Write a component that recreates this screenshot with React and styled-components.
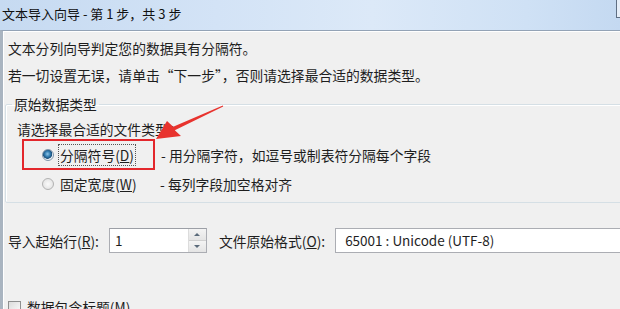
import styled, { createGlobalStyle } from 'styled-components';

const GlobalStyle = createGlobalStyle`
  html, body {
    margin: 0;
    padding: 0;
    background: #f0f0f0;
  }
  body {
    font-family: "Noto Sans CJK SC", "Noto Sans", sans-serif;
    color: #1e1e1e;
  }
`;

const Window = styled.div`
  position: relative;
  width: 620px;
  height: 309px;
  overflow: hidden;
  display: flex;
  flex-direction: column;
  background: #f0f0f0;
`;

const TitleBar = styled.div`
  height: 30px;
  flex: none;
  display: flex;
  align-items: flex-start;
  padding-left: 2px;
  background: linear-gradient(90deg, #c6daf1 0%, #d3e3f6 35%, #dce9f8 60%, #cfe1f5 85%, #c4d9f1 100%);
  font-size: 13px;
  line-height: 28px;
  color: #111;
`;

const TitleText = styled.span`
  flex: 1;
`;

const TitleButton = styled.div`
  width: 3px;
  height: 17px;
  border-left: 1px solid #5f6f83;
  border-bottom: 1px solid #5f6f83;
  background: #e6eef8;
`;

const Client = styled.div`
  flex: 1;
  border-top: 1px solid #93a3b6;
  border-left: 3px solid #a9b4c0;
  box-shadow: inset 1px 1px 0 #ffffff;
  padding: 4px 0 0 5px;
  font-size: 13.8px;
`;

const Line = styled.div`
  line-height: 27px;
  white-space: nowrap;
`;

const GroupBox = styled.fieldset`
  position: relative;
  margin: 6px -30px 0 -3px;
  padding: 0 0 4px 6px;
  border: 1px solid #d5dfe5;
  border-radius: 2px;
  box-shadow: inset 1px 1px 0 #fff;
`;

const Legend = styled.legend`
  padding: 0 2px;
  line-height: 18px;
`;

const SubTitle = styled.div`
  margin-top: 6px;
  line-height: 20px;
  padding-left: 5px;
  white-space: nowrap;
`;

const OptionRow = styled.div`
  display: flex;
  align-items: center;
  height: ${p => p.$h}px;
  padding-left: 10px;
  white-space: nowrap;
`;

const OptionMark = styled.div`
  width: 133px;
  height: 100%;
  box-sizing: border-box;
  display: flex;
  align-items: center;
  padding-left: 18px;
  border: 2px solid ${p => (p.$marked ? '#e3272c' : 'transparent')};
`;

const Radio = styled.span`
  width: 12px;
  height: 12px;
  flex: none;
  box-sizing: border-box;
  border-radius: 50%;
  margin-right: 5px;
  border: 1px solid ${p => (p.$checked ? '#8196ab' : '#b2b2b2')};
  background: ${p =>
    p.$checked
      ? 'radial-gradient(circle at 45% 40%, #8cc4e8 0%, #2f79ad 35%, #1b4f7a 55%, #e8eef3 62%, #f8f8f8 100%)'
      : 'radial-gradient(circle at 50% 50%, #fafafa 0%, #e6e6e6 70%, #d8d8d8 100%)'};
`;

const OptionLabel = styled.span`
  padding: 0 1px;
  outline: ${p => (p.$focused ? '1px dotted #555' : 'none')};
  outline-offset: 0;
`;

const Desc = styled.span`
  margin-left: ${p => p.$gap}px;
`;

const Key = styled.span`
  text-decoration: underline;
`;

const FieldRow = styled.div`
  display: flex;
  align-items: center;
  margin-top: 25px;
  height: 25px;
  white-space: nowrap;
`;

const SpinBox = styled.div`
  display: flex;
  margin-left: 10px;
  height: 25px;
  box-sizing: border-box;
  border: 1px solid #abadb3;
  border-top-color: #9c9fa6;
  background: #fff;
`;

const SpinInput = styled.div`
  width: 78px;
  padding-left: 5px;
  box-sizing: border-box;
  line-height: 23px;
  font-size: 13.5px;
`;

const SpinButtons = styled.div`
  width: 17px;
  display: flex;
  flex-direction: column;
  border-left: 1px solid #dcdcdc;
`;

const SpinButton = styled.div`
  flex: 1;
  display: flex;
  align-items: center;
  justify-content: center;
  background: linear-gradient(#f4f4f4, #e4e4e4);
  border-bottom: ${p => (p.$top ? '1px solid #d0d0d0' : 'none')};
  &::after {
    content: '';
    border-left: 3px solid transparent;
    border-right: 3px solid transparent;
    ${p => (p.$top ? 'border-bottom: 3px solid #5a6a7a;' : 'border-top: 3px solid #5a6a7a;')}
  }
`;

const FieldLabel = styled.span`
  margin-left: ${p => p.$gap}px;
`;

const Select = styled.div`
  margin-left: 10px;
  flex: 1;
  margin-right: -40px;
  height: 25px;
  box-sizing: border-box;
  border: 1px solid #abadb3;
  background: #fff;
  padding-left: 9px;
  line-height: 23px;
  font-size: 13.5px;
`;

const CheckRow = styled.div`
  display: flex;
  align-items: center;
  margin-top: 44px;
  height: 20px;
  white-space: nowrap;
`;

const CheckBox = styled.span`
  width: 13px;
  height: 13px;
  box-sizing: border-box;
  border: 1px solid #8e8f8f;
  background: linear-gradient(135deg, #dcdcdc, #fbfbfb);
  margin: 0 6px 0 0;
`;

const Arrow = styled.svg`
  position: absolute;
  left: 150px;
  top: 100px;
  width: 80px;
  height: 45px;
  pointer-events: none;
`;

export default function App() {
  return (
    <Window>
      <GlobalStyle />
      <TitleBar>
        <TitleText>文本导入向导 - 第 1 步，共 3 步</TitleText>
        <TitleButton />
      </TitleBar>
      <Client>
        <Line>文本分列向导判定您的数据具有分隔符。</Line>
        <Line>若一切设置无误，请单击“下一步”，否则请选择最合适的数据类型。</Line>
        <GroupBox>
          <Legend>原始数据类型</Legend>
          <SubTitle>请选择最合适的文件类型：</SubTitle>
          <OptionRow $h={31}>
            <OptionMark $marked>
              <Radio $checked />
              <OptionLabel $focused>分隔符号(<Key>D</Key>)</OptionLabel>
            </OptionMark>
            <Desc $gap={6}>- 用分隔字符，如逗号或制表符分隔每个字段</Desc>
          </OptionRow>
          <OptionRow $h={28}>
            <OptionMark>
              <Radio />
              <OptionLabel>固定宽度(<Key>W</Key>)</OptionLabel>
            </OptionMark>
            <Desc $gap={5}>- 每列字段加空格对齐</Desc>
          </OptionRow>
        </GroupBox>
        <FieldRow>
          <span>导入起始行(<Key>R</Key>):</span>
          <SpinBox>
            <SpinInput>1</SpinInput>
            <SpinButtons>
              <SpinButton $top />
              <SpinButton />
            </SpinButtons>
          </SpinBox>
          <FieldLabel $gap={12}>文件原始格式(<Key>O</Key>):</FieldLabel>
          <Select>65001 : Unicode (UTF-8)</Select>
        </FieldRow>
        <CheckRow>
          <CheckBox />
          <span>数据包含标题(<Key>M</Key>)</span>
        </CheckRow>
      </Client>
      <Arrow viewBox="0 0 80 45">
        <polygon
          points="6,39 17,21 23.2,26.7 72.8,5.5 73.2,6.5 24.8,30.3 31,36"
          fill="#e8332e"
        />
      </Arrow>
    </Window>
  );
}
